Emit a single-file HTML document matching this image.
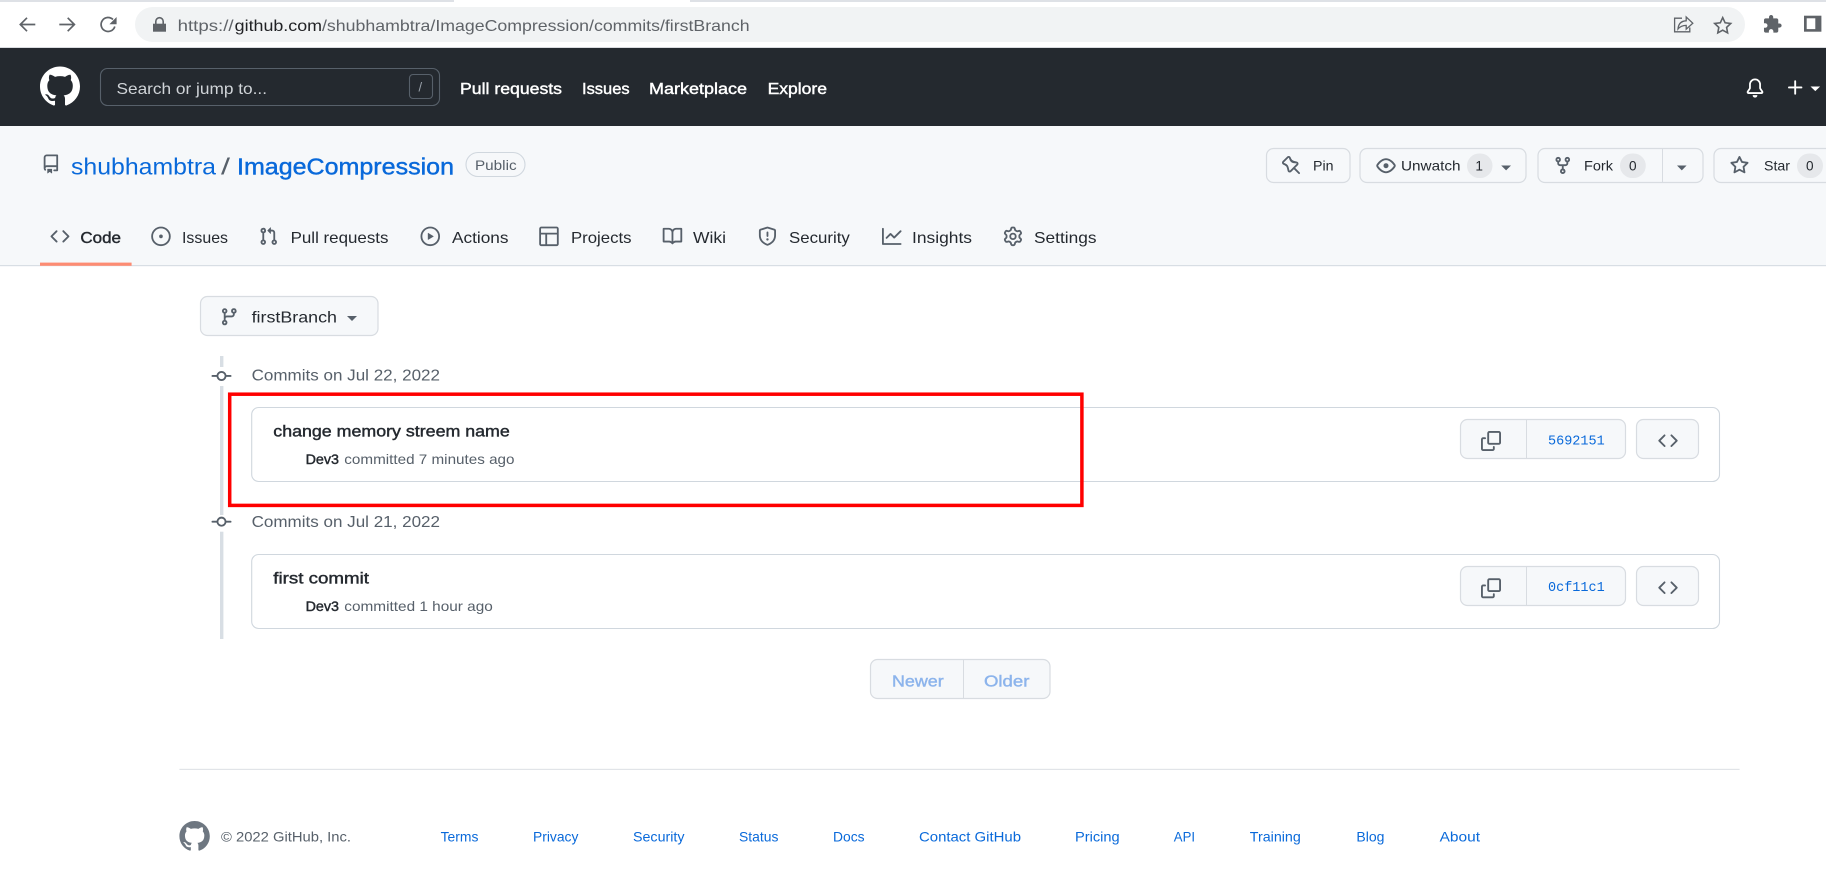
<!DOCTYPE html>
<html lang="en">
<head>
<meta charset="utf-8">
<title>Commits · shubhambtra/ImageCompression</title>
<style>
html,body{margin:0;padding:0;background:#fff;width:1826px;height:889px;overflow:hidden}
svg{display:block;position:absolute;left:0;top:0}
path{fill-rule:evenodd}
text{font-family:"Liberation Sans",sans-serif;white-space:pre}
.mono{font-family:"Liberation Mono",monospace}
.b{stroke-width:.42px}
.ic{fill:#57606a}
.btn{fill:#f6f8fa;stroke:#d8dce1;stroke-width:1.2}
.cnt{fill:#e6e8eb}
</style>
</head>
<body>
<svg width="1826" height="889" viewBox="0 0 1826 889" xmlns="http://www.w3.org/2000/svg">
<!-- browser chrome -->
<rect width="1826" height="48" fill="#fff"/>
<rect x="0" y="0" width="454" height="2" fill="#dee1e6"/>
<rect x="690" y="0" width="1136" height="2" fill="#dee1e6"/>
<rect x="0" y="47" width="1826" height="1" fill="#dadce0"/>
<rect x="135" y="7" width="1610" height="35" rx="17.5" fill="#f1f3f4"/>
<g fill="none" stroke="#5f6368" stroke-width="1.7">
<path d="M35.3 24.5H20.5M27 17.8l-6.7 6.7 6.7 6.7"/>
<path d="M59.3 24.5H74.2M67.7 17.8l6.7 6.7-6.7 6.7"/>
<path d="M114.8 26.5a7 7 0 1 1-1.8-7"/>
</g>
<path d="M116.6 17v7.2h-7.2z" fill="#5f6368"/>
<path d="M153 23.7h13v8h-13z" fill="#5f6368"/>
<path d="M155.8 24v-2.6a3.7 3.7 0 0 1 7.4 0V24" fill="none" stroke="#5f6368" stroke-width="1.6"/>
<text x="177.6" y="30.8" font-size="16" fill="#5f6368" textLength="56" lengthAdjust="spacingAndGlyphs">https://</text>
<text x="234.7" y="30.8" font-size="16" fill="#202124" textLength="87.3" lengthAdjust="spacingAndGlyphs">github.com</text>
<text x="322" y="30.8" font-size="16" fill="#5f6368" textLength="427.6" lengthAdjust="spacingAndGlyphs">/shubhambtra/ImageCompression/commits/firstBranch</text>
<g fill="none" stroke="#5f6368" stroke-width="1.3">
<path d="M1682 18.2h-7.4v13.6h15.2v-4.3"/>
<path d="M1678 29c.4-5.6 3.6-8 8.2-8.2v-3.8l6.6 6.2-6.6 6v-3.8c-3.6 0-6.2 1.2-8.2 3.6z"/>
<path d="M1722.7 17.6l2.4 5.2 5.6.7-4.1 3.9 1 5.5-4.9-2.7-4.9 2.7 1-5.5-4.1-3.9 5.6-.7z" stroke-width="1.6"/>
</g>
<path transform="translate(1762.3 14.2) scale(.84)" fill="#5f6368" d="M20.5 11H19V7c0-1.1-.9-2-2-2h-4V3.5C13 2.12 11.88 1 10.5 1S8 2.12 8 3.5V5H4c-1.1 0-1.99.9-1.99 2v3.8H3.5c1.49 0 2.7 1.21 2.7 2.7s-1.21 2.7-2.7 2.7H2V20c0 1.1.9 2 2 2h3.8v-1.5c0-1.49 1.21-2.7 2.7-2.7 1.49 0 2.7 1.21 2.7 2.7V22H17c1.1 0 2-.9 2-2v-4h1.5c1.38 0 2.5-1.12 2.5-2.5S21.88 11 20.5 11z"/>
<rect x="1804" y="15.7" width="17.4" height="16" fill="#5f6368"/>
<rect x="1806.7" y="18.3" width="8.6" height="10.8" fill="#fff"/>

<!-- global header -->
<rect x="0" y="48" width="1826" height="78" fill="#24292f"/>
<path transform="translate(40 66.5) scale(2.5)" fill="#fff" d="M8 0C3.58 0 0 3.58 0 8c0 3.54 2.29 6.53 5.47 7.59.4.07.55-.17.55-.38 0-.19-.01-.82-.01-1.49-2.01.37-2.53-.49-2.69-.94-.09-.23-.48-.94-.82-1.13-.28-.15-.68-.52-.01-.53.63-.01 1.08.58 1.23.82.72 1.21 1.87.87 2.33.66.07-.52.28-.87.51-1.07-1.78-.2-3.64-.89-3.64-3.95 0-.87.31-1.59.82-2.15-.08-.2-.36-1.02.08-2.12 0 0 .67-.21 2.2.82.64-.18 1.32-.27 2-.27.68 0 1.36.09 2 .27 1.53-1.04 2.2-.82 2.2-.82.44 1.1.16 1.92.08 2.12.51.56.82 1.27.82 2.15 0 3.07-1.87 3.75-3.65 3.95.29.25.54.73.54 1.48 0 1.07-.01 1.93-.01 2.2 0 .21.15.46.55.38A8.013 8.013 0 0016 8c0-4.42-3.58-8-8-8z"/>
<rect x="100.5" y="68.5" width="339" height="37" rx="7" fill="#24292f" stroke="#57606a" stroke-width="1.1"/>
<text x="116.5" y="94" font-size="15.8" fill="#d0d4d8" textLength="150.5" lengthAdjust="spacingAndGlyphs">Search or jump to...</text>
<rect x="409.5" y="74.5" width="23" height="24" rx="3.5" fill="none" stroke="#57606a" stroke-width="1.1"/>
<text x="418.5" y="91.5" font-size="13" fill="#9aa2ab">/</text>
<g font-size="15.8" fill="#fff" stroke="#fff" class="b">
<text x="460" y="94" textLength="102" lengthAdjust="spacingAndGlyphs">Pull requests</text>
<text x="582" y="94" textLength="47.6" lengthAdjust="spacingAndGlyphs">Issues</text>
<text x="649" y="94" textLength="98" lengthAdjust="spacingAndGlyphs">Marketplace</text>
<text x="767.6" y="94" textLength="59.4" lengthAdjust="spacingAndGlyphs">Explore</text>
</g>
<g transform="translate(1745.5 78.5) scale(1.19)" fill="#fff">
<path d="M8 16a2 2 0 001.985-1.75c.017-.137-.097-.25-.235-.25h-3.5c-.138 0-.252.113-.235.25A2 2 0 008 16z"/>
<path d="M8 1.5A3.5 3.5 0 004.5 5v2.947c0 .346-.102.683-.294.97l-1.703 2.556a.018.018 0 00-.003.01l.001.006c0 .002.002.004.004.006a.017.017 0 00.006.004l.007.001h10.964l.007-.001a.016.016 0 00.006-.004.016.016 0 00.004-.006l.001-.007a.017.017 0 00-.003-.01l-1.703-2.554a1.75 1.75 0 01-.294-.97V5A3.5 3.5 0 008 1.5zM3 5a5 5 0 0110 0v2.947c0 .05.015.098.042.139l1.703 2.555A1.518 1.518 0 0113.482 13H2.518a1.518 1.518 0 01-1.263-2.36l1.703-2.554A.25.25 0 003 7.947V5z"/>
</g>
<path transform="translate(1785.5 77.8) scale(1.25)" fill="#fff" d="M7.75 2a.75.75 0 01.75.75V7h4.25a.75.75 0 110 1.5H8.5v4.25a.75.75 0 11-1.5 0V8.5H2.75a.75.75 0 010-1.5H7V2.75A.75.75 0 017.75 2z"/>
<path d="M1810.5 86.5h9.6l-4.8 4.6z" fill="#fff"/>

<!-- repo head -->
<rect x="0" y="126" width="1826" height="139.5" fill="#f6f8fa"/>
<rect x="0" y="265" width="1826" height="1.2" fill="#d8dee4"/>
<path class="ic" transform="translate(41.3 154.5) scale(1.2)" d="M2 2.5A2.5 2.5 0 014.5 0h8.75a.75.75 0 01.75.75v12.5a.75.75 0 01-.75.75h-2.5a.75.75 0 110-1.5h1.75v-2h-8a1 1 0 00-.714 1.7.75.75 0 01-1.072 1.05A2.495 2.495 0 012 11.5v-9zm10.5-1V9h-8c-.356 0-.694.074-1 .208V2.5a1 1 0 011-1h8zM5 12.25v3.25a.25.25 0 00.4.2l1.45-1.087a.25.25 0 01.3 0L8.6 15.7a.25.25 0 00.4-.2v-3.25a.25.25 0 00-.25-.25h-3.5a.25.25 0 00-.25.25z"/>
<text x="71" y="174.6" font-size="22.8" fill="#0969da" textLength="145" lengthAdjust="spacingAndGlyphs">shubhambtra</text>
<text x="221" y="174.6" font-size="22.8" fill="#57606a" textLength="9" lengthAdjust="spacingAndGlyphs">/</text>
<text x="237" y="174.6" font-size="22.8" fill="#0969da" stroke="#0969da" class="b" textLength="217" lengthAdjust="spacingAndGlyphs">ImageCompression</text>
<rect x="466" y="152.5" width="59" height="24" rx="12" fill="none" stroke="#d0d7de" stroke-width="1.1"/>
<text x="475" y="170" font-size="13.6" fill="#57606a" textLength="41.6" lengthAdjust="spacingAndGlyphs">Public</text>

<!-- repo action buttons -->
<rect class="btn" x="1266.5" y="148.5" width="83.5" height="34" rx="7"/>
<path class="ic" transform="translate(1281.7 155.7) scale(1.22)" d="M4.456.734a1.75 1.75 0 012.826.504l.613 1.327a3.081 3.081 0 002.084 1.707l2.454.584c1.332.317 1.8 1.972.832 2.94L11.06 10l3.72 3.72a.75.75 0 11-1.061 1.06L10 11.06l-2.204 2.205c-.968.968-2.623.5-2.94-.832l-.584-2.454a3.081 3.081 0 00-1.707-2.084l-1.327-.613a1.75 1.75 0 01-.504-2.826L4.456.734zM5.92 1.866a.25.25 0 00-.404-.072L1.794 5.516a.25.25 0 00.072.404l1.328.613A4.582 4.582 0 015.73 9.63l.584 2.454a.25.25 0 00.42.12l5.47-5.47a.25.25 0 00-.12-.42L9.63 6.13a4.583 4.583 0 01-3.098-2.537L5.92 1.866z"/>
<text x="1313" y="170.7" font-size="13.6" fill="#24292f" textLength="20.5" lengthAdjust="spacingAndGlyphs">Pin</text>

<rect class="btn" x="1360" y="148.5" width="166" height="34" rx="7"/>
<path class="ic" transform="translate(1376 155.7) scale(1.25)" d="M1.679 7.932c.412-.621 1.242-1.75 2.366-2.717C5.175 4.242 6.527 3.5 8 3.5c1.473 0 2.824.742 3.955 1.715 1.124.967 1.954 2.096 2.366 2.717a.119.119 0 010 .136c-.412.621-1.242 1.75-2.366 2.717C10.825 11.758 9.473 12.5 8 12.5c-1.473 0-2.824-.742-3.955-1.715C2.92 9.818 2.09 8.69 1.679 8.068a.119.119 0 010-.136zM8 2c-1.981 0-3.67.992-4.933 2.078C1.797 5.169.88 6.423.43 7.1a1.619 1.619 0 000 1.798c.45.678 1.367 1.932 2.637 3.024C4.329 13.008 6.019 14 8 14c1.981 0 3.67-.992 4.933-2.078 1.27-1.091 2.187-2.345 2.637-3.023a1.619 1.619 0 000-1.798c-.45-.678-1.367-1.932-2.637-3.023C11.671 2.992 9.981 2 8 2zm0 8a2 2 0 100-4 2 2 0 000 4z"/>
<text x="1401" y="170.7" font-size="13.6" fill="#24292f" textLength="59.5" lengthAdjust="spacingAndGlyphs">Unwatch</text>
<rect class="cnt" x="1467" y="153.5" width="25.5" height="24.5" rx="12.2"/>
<text x="1475.4" y="170.7" font-size="13.6" fill="#24292f">1</text>
<path d="M1501.2 165.5h9.8l-4.9 4.9z" fill="#57606a"/>

<rect class="btn" x="1538" y="148.5" width="165" height="34" rx="7"/>
<rect x="1662" y="148.5" width="1" height="34" fill="#d8dce1"/>
<path class="ic" transform="translate(1553 155.7) scale(1.22)" d="M5 3.25a.75.75 0 11-1.5 0 .75.75 0 011.5 0zm0 2.122a2.25 2.25 0 10-1.5 0v.878A2.25 2.25 0 005.75 8.5h1.5v2.128a2.251 2.251 0 101.5 0V8.5h1.5a2.25 2.25 0 002.25-2.25v-.878a2.25 2.25 0 10-1.5 0v.878a.75.75 0 01-.75.75h-4.5A.75.75 0 015 6.25v-.878zm3.75 7.378a.75.75 0 11-1.5 0 .75.75 0 011.5 0zm3-8.75a.75.75 0 100-1.5.75.75 0 000 1.5z"/>
<text x="1584" y="170.7" font-size="13.6" fill="#24292f" textLength="29" lengthAdjust="spacingAndGlyphs">Fork</text>
<rect class="cnt" x="1620" y="153.5" width="25.8" height="24.5" rx="12.2"/>
<text x="1629" y="170.7" font-size="13.6" fill="#24292f">0</text>
<path d="M1677 165.5h9.6l-4.8 4.9z" fill="#57606a"/>

<rect class="btn" x="1714" y="148.5" width="130" height="34" rx="7"/>
<path class="ic" transform="translate(1729.7 155.7) scale(1.22)" d="M8 .25a.75.75 0 01.673.418l1.882 3.815 4.21.612a.75.75 0 01.416 1.279l-3.046 2.97.719 4.192a.75.75 0 01-1.088.791L8 12.347l-3.766 1.98a.75.75 0 01-1.088-.79l.72-4.194L.818 6.374a.75.75 0 01.416-1.28l4.21-.611L7.327.668A.75.75 0 018 .25zm0 2.445L6.615 5.5a.75.75 0 01-.564.41l-3.097.45 2.24 2.184a.75.75 0 01.216.664l-.528 3.084 2.769-1.456a.75.75 0 01.698 0l2.77 1.456-.53-3.084a.75.75 0 01.216-.664l2.24-2.183-3.096-.45a.75.75 0 01-.564-.41L8 2.694v.001z"/>
<text x="1764" y="170.7" font-size="13.6" fill="#24292f" textLength="26" lengthAdjust="spacingAndGlyphs">Star</text>
<rect class="cnt" x="1797" y="153.5" width="26" height="24.5" rx="12.2"/>
<text x="1806" y="170.7" font-size="13.6" fill="#24292f">0</text>

<!-- tabs -->
<rect x="40" y="262.6" width="91.6" height="3.2" fill="#fd8c73"/>
<g class="ic">
<path transform="translate(50.2 226.6) scale(1.22)" d="M4.72 3.22a.75.75 0 011.06 1.06L2.06 8l3.72 3.72a.75.75 0 11-1.06 1.06L.47 8.53a.75.75 0 010-1.06l4.25-4.25zm6.56 0a.75.75 0 10-1.06 1.06L13.94 8l-3.72 3.72a.75.75 0 101.06 1.06l4.25-4.25a.75.75 0 000-1.06l-4.25-4.25z"/>
<g transform="translate(151.2 226.6) scale(1.22)"><path d="M8 9.5a1.5 1.5 0 100-3 1.5 1.5 0 000 3z"/><path d="M8 0a8 8 0 100 16A8 8 0 008 0zM1.5 8a6.5 6.5 0 1113 0 6.5 6.5 0 01-13 0z"/></g>
<path transform="translate(258.7 226.6) scale(1.22)" d="M7.177 3.073L9.573.677A.25.25 0 0110 .854v4.792a.25.25 0 01-.427.177L7.177 3.427a.25.25 0 010-.354zM3.75 2.5a.75.75 0 100 1.5.75.75 0 000-1.5zm-2.25.75a2.25 2.25 0 113 2.122v5.256a2.251 2.251 0 11-1.5 0V5.372A2.25 2.25 0 011.5 3.25zM11 2.5h-1V4h1a1 1 0 011 1v5.628a2.251 2.251 0 101.5 0V5A2.5 2.5 0 0011 2.5zm1 10.25a.75.75 0 111.5 0 .75.75 0 01-1.5 0zM3.75 12a.75.75 0 100 1.5.75.75 0 000-1.5z"/>
<path transform="translate(420.5 226.6) scale(1.22)" d="M1.5 8a6.5 6.5 0 1113 0 6.5 6.5 0 01-13 0zM8 0a8 8 0 100 16A8 8 0 008 0zM6.379 5.227A.25.25 0 006 5.442v5.117a.25.25 0 00.379.214l4.264-2.559a.25.25 0 000-.428L6.379 5.227z"/>
<path transform="translate(539.2 226.6) scale(1.22)" d="M1.75 0A1.75 1.75 0 000 1.75v12.5C0 15.216.784 16 1.75 16h12.5A1.75 1.75 0 0016 14.25V1.75A1.75 1.75 0 0014.25 0H1.75zM1.5 1.75a.25.25 0 01.25-.25h12.5a.25.25 0 01.25.25V5h-13V1.75zm0 4.75v7.75c0 .138.112.25.25.25H5v-8H1.5zm5 8v-8h8v7.75a.25.25 0 01-.25.25H6.5z"/>
<path transform="translate(662.7 226.6) scale(1.22)" d="M0 1.75A.75.75 0 01.75 1h4.253c1.227 0 2.317.59 3 1.501A3.744 3.744 0 0111.006 1h4.245a.75.75 0 01.75.75v10.5a.75.75 0 01-.75.75h-4.507a2.25 2.25 0 00-1.591.659l-.622.621a.75.75 0 01-1.06 0l-.622-.621A2.25 2.25 0 005.258 13H.75a.75.75 0 01-.75-.75V1.75zm8.755 3a2.25 2.25 0 012.25-2.25H14.5v9h-3.757c-.71 0-1.4.201-1.992.572l.004-7.322zm-1.504 7.324l.004-5.073-.002-2.253A2.25 2.25 0 005.003 2.5H1.5v9h3.757a3.75 3.75 0 011.994.574z"/>
<path transform="translate(757.7 226.6) scale(1.22)" d="M7.467.133a1.75 1.75 0 011.066 0l5.25 1.68A1.75 1.75 0 0115 3.48V7c0 1.566-.32 3.182-1.303 4.682-.983 1.498-2.585 2.813-5.032 3.855a1.7 1.7 0 01-1.33 0c-2.447-1.042-4.049-2.357-5.032-3.855C1.32 10.182 1 8.566 1 7V3.48a1.75 1.75 0 011.217-1.667l5.25-1.68zm.61 1.429a.25.25 0 00-.153 0l-5.25 1.68a.25.25 0 00-.174.238V7c0 1.358.275 2.666 1.057 3.86.784 1.194 2.121 2.34 4.366 3.297a.2.2 0 00.154 0c2.245-.956 3.582-2.104 4.366-3.298C13.225 9.666 13.5 8.36 13.5 7V3.48a.25.25 0 00-.174-.237l-5.25-1.68zM9 10.5a1 1 0 11-2 0 1 1 0 012 0zm-.25-5.75a.75.75 0 10-1.5 0v3a.75.75 0 001.5 0v-3z"/>
<path transform="translate(882 226.6) scale(1.22)" d="M1.5 1.75a.75.75 0 00-1.5 0v12.5c0 .414.336.75.75.75h14.5a.75.75 0 000-1.5H1.5V1.75zm14.28 2.53a.75.75 0 00-1.06-1.06L10 7.94 7.53 5.47a.75.75 0 00-1.06 0L3.22 8.72a.75.75 0 001.06 1.06L7 7.06l2.47 2.47a.75.75 0 001.06 0l5.25-5.25z"/>
<path transform="translate(1003.2 226.6) scale(1.22)" d="M7.429 1.525a6.593 6.593 0 011.142 0c.036.003.108.036.137.146l.289 1.105c.147.56.55.967.997 1.189.174.086.341.183.501.29.417.278.97.423 1.53.27l1.102-.303c.11-.03.175.016.195.046.219.31.41.641.573.989.014.031.022.11-.059.19l-.815.806c-.411.406-.562.957-.53 1.456a4.588 4.588 0 010 .582c-.032.499.119 1.05.53 1.456l.815.806c.08.08.073.159.059.19a6.494 6.494 0 01-.573.99c-.02.029-.086.074-.195.045l-1.103-.303c-.559-.153-1.112-.008-1.529.27-.16.107-.327.204-.5.29-.449.222-.851.628-.998 1.189l-.289 1.105c-.029.11-.101.143-.137.146a6.613 6.613 0 01-1.142 0c-.036-.003-.108-.037-.137-.146l-.289-1.105c-.147-.56-.55-.967-.997-1.189a4.502 4.502 0 01-.501-.29c-.417-.278-.97-.423-1.53-.27l-1.102.303c-.11.03-.175-.016-.195-.046a6.492 6.492 0 01-.573-.989c-.014-.031-.022-.11.059-.19l.815-.806c.411-.406.562-.957.53-1.456a4.587 4.587 0 010-.582c.032-.499-.119-1.05-.53-1.456l-.815-.806c-.08-.08-.073-.159-.059-.19a6.44 6.44 0 01.573-.99c.02-.029.086-.075.195-.045l1.103.303c.559.153 1.112.008 1.529-.27.16-.107.327-.204.5-.29.449-.222.851-.628.998-1.189l.289-1.105c.029-.11.101-.143.137-.146zM8 0c-.236 0-.47.01-.701.03-.743.065-1.29.615-1.458 1.261l-.29 1.106c-.017.066-.078.158-.211.224a5.994 5.994 0 00-.668.386c-.123.082-.233.09-.3.071L3.27 2.776c-.644-.177-1.392.02-1.82.63a7.977 7.977 0 00-.704 1.217c-.315.675-.111 1.422.363 1.891l.815.806c.05.048.098.147.088.294a6.084 6.084 0 000 .772c.01.147-.038.246-.088.294l-.815.806c-.474.469-.678 1.216-.363 1.891.2.428.436.835.704 1.218.428.609 1.176.806 1.82.63l1.103-.303c.066-.019.176-.011.299.071.213.143.436.272.668.386.133.066.194.158.212.224l.289 1.106c.169.646.715 1.196 1.458 1.26a8.094 8.094 0 001.402 0c.743-.064 1.29-.614 1.458-1.26l.29-1.106c.017-.066.078-.158.211-.224a5.98 5.98 0 00.668-.386c.123-.082.233-.09.3-.071l1.102.302c.644.177 1.392-.02 1.82-.63.268-.382.505-.789.704-1.217.315-.675.111-1.422-.364-1.891l-.814-.806c-.05-.048-.098-.147-.088-.294a6.1 6.1 0 000-.772c-.01-.147.039-.246.088-.294l.814-.806c.475-.469.679-1.216.364-1.891a7.992 7.992 0 00-.704-1.218c-.428-.609-1.176-.806-1.82-.63l-1.103.303c-.066.019-.176.011-.299-.071a5.991 5.991 0 00-.668-.386c-.133-.066-.194-.158-.212-.224L10.16 1.29C9.99.645 9.444.095 8.701.031A8.094 8.094 0 008 0zm1.5 8a1.5 1.5 0 11-3 0 1.5 1.5 0 013 0zM11 8a3 3 0 11-6 0 3 3 0 016 0z"/>
</g>
<g font-size="15.8" fill="#24292f">
<text x="80.4" y="243" class="b" stroke="#24292f" textLength="40.6" lengthAdjust="spacingAndGlyphs">Code</text>
<text x="182" y="243" textLength="46" lengthAdjust="spacingAndGlyphs">Issues</text>
<text x="290.6" y="243" textLength="97.9" lengthAdjust="spacingAndGlyphs">Pull requests</text>
<text x="452" y="243" textLength="56.5" lengthAdjust="spacingAndGlyphs">Actions</text>
<text x="571" y="243" textLength="60.5" lengthAdjust="spacingAndGlyphs">Projects</text>
<text x="693" y="243" textLength="33" lengthAdjust="spacingAndGlyphs">Wiki</text>
<text x="789" y="243" textLength="60.8" lengthAdjust="spacingAndGlyphs">Security</text>
<text x="912" y="243" textLength="60" lengthAdjust="spacingAndGlyphs">Insights</text>
<text x="1034" y="243" textLength="62.5" lengthAdjust="spacingAndGlyphs">Settings</text>
</g>

<!-- branch button -->
<rect class="btn" x="200.5" y="296.5" width="177.5" height="39" rx="7"/>
<path class="ic" transform="translate(219.5 307) scale(1.22)" d="M11.75 2.5a.75.75 0 100 1.5.75.75 0 000-1.5zm-2.25.75a2.25 2.25 0 113 2.122V6A2.5 2.5 0 0110 8.5H6a1 1 0 00-1 1v1.128a2.251 2.251 0 11-1.5 0V5.372a2.25 2.25 0 111.5 0v1.836A2.492 2.492 0 016 7h4a1 1 0 001-1v-.628A2.25 2.25 0 019.5 3.25zM4.25 12a.75.75 0 100 1.5.75.75 0 000-1.5zM3.5 3.25a.75.75 0 111.5 0 .75.75 0 01-1.5 0z"/>
<text x="251.6" y="322.7" font-size="15.8" fill="#24292f" textLength="85.4" lengthAdjust="spacingAndGlyphs">firstBranch</text>
<path d="M347 316h10l-5 5z" fill="#57606a"/>

<!-- timeline -->
<g fill="#d8dee4">
<rect x="220" y="356" width="3.4" height="11"/>
<rect x="220" y="386" width="3.4" height="129"/>
<rect x="220" y="531.7" width="3.4" height="107.3"/>
</g>
<path class="ic" transform="translate(211.5 366.3) scale(1.25)" d="M10.5 7.75a2.5 2.5 0 11-5 0 2.5 2.5 0 015 0zm1.43.75a4.002 4.002 0 01-7.86 0H.75a.75.75 0 110-1.5h3.32a4.001 4.001 0 017.86 0h3.32a.75.75 0 110 1.5h-3.32z"/>
<path class="ic" transform="translate(211.5 512) scale(1.25)" d="M10.5 7.75a2.5 2.5 0 11-5 0 2.5 2.5 0 015 0zm1.43.75a4.002 4.002 0 01-7.86 0H.75a.75.75 0 110-1.5h3.32a4.001 4.001 0 017.86 0h3.32a.75.75 0 110 1.5h-3.32z"/>
<text x="251.6" y="380.7" font-size="15.8" fill="#57606a" textLength="188.4" lengthAdjust="spacingAndGlyphs">Commits on Jul 22, 2022</text>
<text x="251.6" y="527" font-size="15.8" fill="#57606a" textLength="188.4" lengthAdjust="spacingAndGlyphs">Commits on Jul 21, 2022</text>

<!-- commit 1 -->
<rect x="251.7" y="407.5" width="1467.8" height="74" rx="7" fill="#fff" stroke="#d0d7de" stroke-width="1.1"/>
<text x="273.3" y="436.7" font-size="15.8" fill="#24292f" stroke="#24292f" class="b" textLength="236.5" lengthAdjust="spacingAndGlyphs">change memory streem name</text>
<text x="305.6" y="464" font-size="13.6" fill="#24292f" stroke="#24292f" class="b" textLength="33.4" lengthAdjust="spacingAndGlyphs">Dev3</text>
<text x="344.3" y="464" font-size="13.6" fill="#57606a" textLength="170.2" lengthAdjust="spacingAndGlyphs">committed 7 minutes ago</text>
<rect class="btn" x="1460.5" y="419.5" width="165" height="39" rx="7"/>
<rect x="1526" y="419.5" width="1" height="39" fill="#d8dce1"/>
<g class="ic" transform="translate(1481 431) scale(1.25)"><path d="M0 6.75C0 5.784.784 5 1.75 5h1.5a.75.75 0 010 1.5h-1.5a.25.25 0 00-.25.25v7.5c0 .138.112.25.25.25h7.5a.25.25 0 00.25-.25v-1.5a.75.75 0 011.5 0v1.5A1.75 1.75 0 019.25 16h-7.5A1.75 1.75 0 010 14.25v-7.5z"/><path d="M5 1.75C5 .784 5.784 0 6.75 0h7.5C15.216 0 16 .784 16 1.75v7.5A1.75 1.75 0 0114.25 11h-7.5A1.75 1.75 0 015 9.25v-7.5zm1.75-.25a.25.25 0 00-.25.25v7.5c0 .138.112.25.25.25h7.5a.25.25 0 00.25-.25v-7.5a.25.25 0 00-.25-.25h-7.5z"/></g>
<text x="1548" y="444.3" font-size="14" fill="#0969da" class="mono" textLength="56.7" lengthAdjust="spacingAndGlyphs">5692151</text>
<rect class="btn" x="1636.5" y="419.5" width="62" height="39" rx="7"/>
<path class="ic" transform="translate(1658 430.7) scale(1.25)" d="M4.72 3.22a.75.75 0 011.06 1.06L2.06 8l3.72 3.72a.75.75 0 11-1.06 1.06L.47 8.53a.75.75 0 010-1.06l4.25-4.25zm6.56 0a.75.75 0 10-1.06 1.06L13.94 8l-3.72 3.72a.75.75 0 101.06 1.06l4.25-4.25a.75.75 0 000-1.06l-4.25-4.25z"/>

<!-- commit 2 -->
<rect x="251.7" y="554.5" width="1467.8" height="74" rx="7" fill="#fff" stroke="#d0d7de" stroke-width="1.1"/>
<text x="273.3" y="583.3" font-size="15.8" fill="#24292f" stroke="#24292f" class="b" textLength="95.7" lengthAdjust="spacingAndGlyphs">first commit</text>
<text x="305.6" y="611" font-size="13.6" fill="#24292f" stroke="#24292f" class="b" textLength="33.4" lengthAdjust="spacingAndGlyphs">Dev3</text>
<text x="344.3" y="611" font-size="13.6" fill="#57606a" textLength="148.5" lengthAdjust="spacingAndGlyphs">committed 1 hour ago</text>
<rect class="btn" x="1460.5" y="566.5" width="165" height="39" rx="7"/>
<rect x="1526" y="566.5" width="1" height="39" fill="#d8dce1"/>
<g class="ic" transform="translate(1481 578.3) scale(1.25)"><path d="M0 6.75C0 5.784.784 5 1.75 5h1.5a.75.75 0 010 1.5h-1.5a.25.25 0 00-.25.25v7.5c0 .138.112.25.25.25h7.5a.25.25 0 00.25-.25v-1.5a.75.75 0 011.5 0v1.5A1.75 1.75 0 019.25 16h-7.5A1.75 1.75 0 010 14.25v-7.5z"/><path d="M5 1.75C5 .784 5.784 0 6.75 0h7.5C15.216 0 16 .784 16 1.75v7.5A1.75 1.75 0 0114.25 11h-7.5A1.75 1.75 0 015 9.25v-7.5zm1.75-.25a.25.25 0 00-.25.25v7.5c0 .138.112.25.25.25h7.5a.25.25 0 00.25-.25v-7.5a.25.25 0 00-.25-.25h-7.5z"/></g>
<text x="1548" y="591" font-size="14" fill="#0969da" class="mono" textLength="56.7" lengthAdjust="spacingAndGlyphs">0cf11c1</text>
<rect class="btn" x="1636.5" y="566.5" width="62" height="39" rx="7"/>
<path class="ic" transform="translate(1658 577.7) scale(1.25)" d="M4.72 3.22a.75.75 0 011.06 1.06L2.06 8l3.72 3.72a.75.75 0 11-1.06 1.06L.47 8.53a.75.75 0 010-1.06l4.25-4.25zm6.56 0a.75.75 0 10-1.06 1.06L13.94 8l-3.72 3.72a.75.75 0 101.06 1.06l4.25-4.25a.75.75 0 000-1.06l-4.25-4.25z"/>

<!-- red annotation -->
<rect x="229.7" y="394.2" width="852.2" height="111.2" fill="none" stroke="#ff0000" stroke-width="3.5"/>

<!-- pagination -->
<rect class="btn" x="870.5" y="659.5" width="179.5" height="39" rx="7"/>
<rect x="963" y="659.5" width="1" height="39" fill="#d8dce1"/>
<text x="892" y="686.7" font-size="15.8" fill="#8cb4ec" stroke="#8cb4ec" class="b" textLength="51.7" lengthAdjust="spacingAndGlyphs">Newer</text>
<text x="984" y="686.7" font-size="15.8" fill="#8cb4ec" stroke="#8cb4ec" class="b" textLength="45.4" lengthAdjust="spacingAndGlyphs">Older</text>

<!-- footer -->
<rect x="179.4" y="768.8" width="1560.2" height="1.2" fill="#e1e4e8"/>
<path transform="translate(179.4 821) scale(1.9)" fill="#6e7781" d="M8 0C3.58 0 0 3.58 0 8c0 3.54 2.29 6.53 5.47 7.59.4.07.55-.17.55-.38 0-.19-.01-.82-.01-1.49-2.01.37-2.53-.49-2.69-.94-.09-.23-.48-.94-.82-1.13-.28-.15-.68-.52-.01-.53.63-.01 1.08.58 1.23.82.72 1.21 1.87.87 2.33.66.07-.52.28-.87.51-1.07-1.78-.2-3.64-.89-3.64-3.95 0-.87.31-1.59.82-2.15-.08-.2-.36-1.02.08-2.12 0 0 .67-.21 2.2.82.64-.18 1.32-.27 2-.27.68 0 1.36.09 2 .27 1.53-1.04 2.2-.82 2.2-.82.44 1.1.16 1.92.08 2.12.51.56.82 1.27.82 2.15 0 3.07-1.87 3.75-3.65 3.95.29.25.54.73.54 1.48 0 1.07-.01 1.93-.01 2.2 0 .21.15.46.55.38A8.013 8.013 0 0016 8c0-4.42-3.58-8-8-8z"/>
<text x="221" y="841.7" font-size="13.6" fill="#57606a" textLength="130" lengthAdjust="spacingAndGlyphs">© 2022 GitHub, Inc.</text>
<g font-size="13.6" fill="#0969da">
<text x="440.6" y="841.7" textLength="37.8" lengthAdjust="spacingAndGlyphs">Terms</text>
<text x="533" y="841.7" textLength="45.4" lengthAdjust="spacingAndGlyphs">Privacy</text>
<text x="633" y="841.7" textLength="51.5" lengthAdjust="spacingAndGlyphs">Security</text>
<text x="739" y="841.7" textLength="39.4" lengthAdjust="spacingAndGlyphs">Status</text>
<text x="833" y="841.7" textLength="31.6" lengthAdjust="spacingAndGlyphs">Docs</text>
<text x="919" y="841.7" textLength="102" lengthAdjust="spacingAndGlyphs">Contact GitHub</text>
<text x="1075" y="841.7" textLength="44.7" lengthAdjust="spacingAndGlyphs">Pricing</text>
<text x="1173.8" y="841.7" textLength="21.2" lengthAdjust="spacingAndGlyphs">API</text>
<text x="1249.8" y="841.7" textLength="51" lengthAdjust="spacingAndGlyphs">Training</text>
<text x="1356.4" y="841.7" textLength="28.1" lengthAdjust="spacingAndGlyphs">Blog</text>
<text x="1439.6" y="841.7" textLength="40.4" lengthAdjust="spacingAndGlyphs">About</text>
</g>
</svg>
</body>
</html>
